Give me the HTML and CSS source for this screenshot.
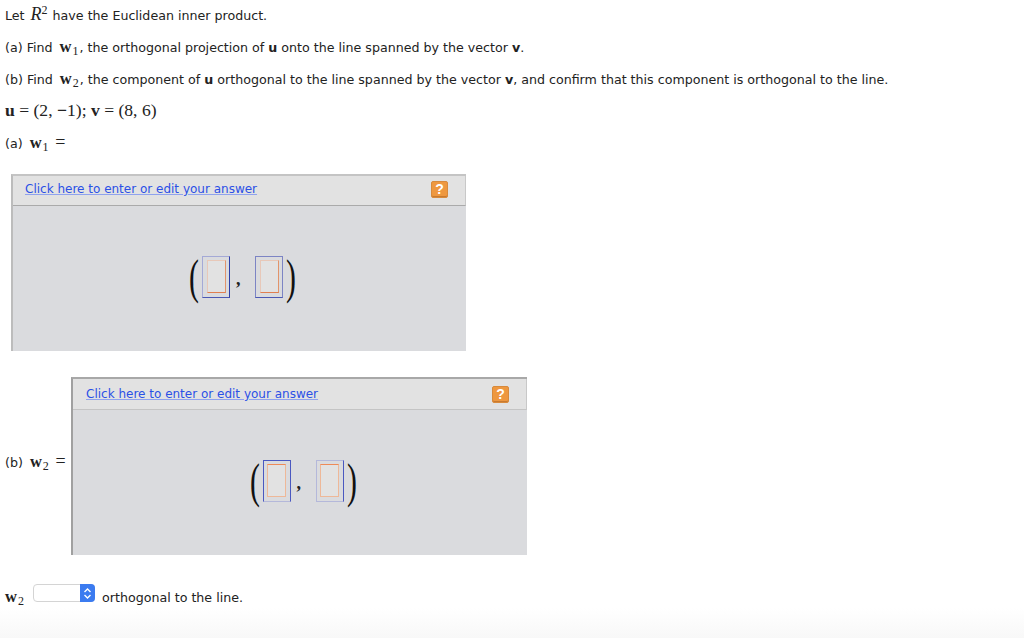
FILE: index.html
```html
<!DOCTYPE html>
<html lang="en">
<head>
    <meta charset="UTF-8">
    <title>Orthogonal projection</title>
    <link rel="stylesheet" href="styles.css">
</head>
<body>

    <p class="line">Let <span class="math"><i class="big">R</i><sup>2</sup></span> have the Euclidean inner product.</p>
    <p class="line">(a) Find <span class="math"><b class="vec">w</b><sub>1</sub></span>, the orthogonal projection of <b>u</b> onto the line spanned by the vector <b>v</b>.</p>
    <p class="line">(b) Find <span class="math"><b class="vec">w</b><sub>2</sub></span>, the component of <b>u</b> orthogonal to the line spanned by the vector <b>v</b>, and confirm that this component is orthogonal to the line.</p>
    <p class="line"><span class="math large"><b>u</b> = (2, <b>&minus;</b>1); <b>v</b> = (8, 6)</span></p>
    <p class="line">(a) <span class="math"><b class="vec">w</b><sub>1</sub> <span class="equals">=</span></span></p>

    <!-- answer a -->
    <div class="panel panel-a">
        <div class="panel-head">
            <a class="edit-link" href="#">Click here to enter or edit your answer</a>
            <span class="help">?</span>
        </div>
        <div class="panel-body">
            <span class="paren">(</span>
            <span class="box dark-right"><span class="cell warm-bottom"></span></span>
            <span class="comma">,</span>
            <span class="box dark-bottom"><span class="cell warm-bottom"></span></span>
            <span class="paren">)</span>
        </div>
    </div>

    <!-- answer b -->
    <div class="answer-row">
        <span class="answer-label">(b) <span class="math"><b class="vec">w</b><sub>2</sub> <span class="equals">=</span></span></span>
        <div class="panel panel-b">
            <div class="panel-head">
                <a class="edit-link" href="#">Click here to enter or edit your answer</a>
                <span class="help">?</span>
            </div>
            <div class="panel-body">
                <span class="paren">(</span>
                <span class="box dark-top"><span class="cell warm-top"></span></span>
                <span class="comma">,</span>
                <span class="box dark-right-only"><span class="cell warm-top"></span></span>
                <span class="paren">)</span>
            </div>
        </div>
    </div>

    <div class="last-row">
        <span class="math w2"><b>w</b><sub>2</sub></span>
        <span class="select">
            <span class="select-arrows">
                <svg width="9" height="13" viewBox="0 0 9 13" fill="none" stroke="#fff" stroke-width="1.4">
                    <path d="M1.5 5 L4.5 2 L7.5 5"/>
                    <path d="M1.5 8 L4.5 11 L7.5 8"/>
                </svg>
            </span>
        </span>
        <span>orthogonal to the line.</span>
    </div>

</body>
</html>
```

FILE: styles.css
```css
* {
    margin: 0;
    padding: 0;
    box-sizing: border-box;
}

body {
    min-height: 638px;
    font-family: "DejaVu Sans", Verdana, sans-serif;
    font-size: 12.65px;
    color: #222;
    background: linear-gradient(#fff 608px, #f8f8f8 638px);
}

.line {
    height: 32px;
    line-height: 31px;
    padding-left: 5px;
    white-space: nowrap;
}

/* formulas */
.math {
    font-family: "Liberation Serif", "Times New Roman", serif;
    font-size: 15px;
    line-height: 1;
}

.math.large {
    font-size: 17.6px;
}

.math .big {
    margin-left: 2px;
    font-size: 18px;
    line-height: 1;
}

.math .vec,
.w2 b {
    font-size: 16.5px;
    line-height: 1;
}

.math .vec {
    margin-left: 3px;
}

.math sup,
.math sub {
    font-size: 12px;
    line-height: 0;
}

.math sub {
    margin: 0 1px 0 1px;
    vertical-align: -3px;
}

.math sup {
    margin-right: 1px;
    vertical-align: 6px;
}

.equals {
    margin-left: 2px;
    font-size: 18px;
    line-height: 1;
}

/* answer panels */
.panel {
    display: flex;
    flex-direction: column;
    background: #dadbde;
    border-top: 2px solid #c4c4c4;
    border-left: 2px solid #bcbcbc;
}

.panel-a {
    width: 455px;
    height: 177px;
    margin: 14px 0 0 11px;
}

.panel-b {
    width: 456px;
    height: 178px;
    border-top-color: #a8a8a8;
    border-left-color: #a0a0a0;
}

.panel-head {
    height: 31px;
    flex: none;
    display: flex;
    align-items: center;
    justify-content: space-between;
    padding: 0 17px 0 13px;
    background: #e2e2e2;
    border-right: 1px solid #c8c8c8;
    border-bottom: 1px solid #aaa;
}

.panel-a .panel-head {
    height: 30px;
    padding-left: 12px;
    padding-bottom: 3px;
}

.panel-b .panel-head {
    border-bottom-color: #c4c4c4;
}

.edit-link {
    font-size: 12px;
    color: #2b50e6;
    text-decoration-color: #8fa2ee;
}

.help {
    width: 17px;
    height: 17px;
    display: flex;
    align-items: center;
    justify-content: center;
    font-family: "Liberation Sans", Arial, sans-serif;
    font-size: 14px;
    font-weight: bold;
    color: #fff;
    background: #ee9840;
    border: 1px solid #d88a3c;
    border-radius: 2px;
    box-shadow: inset 0 -1px 0 #c87a30;
}

.panel-body {
    flex: 1;
    display: flex;
    align-items: center;
    justify-content: center;
    padding: 0 0 4px 6px;
}

.paren {
    width: 8px;
    height: 44px;
    display: flex;
    align-items: center;
    justify-content: center;
    font-family: "Liberation Serif", "Times New Roman", serif;
    font-size: 48px;
    color: #111;
    transform: scaleX(0.62);
}

.box {
    width: 28px;
    height: 42px;
    display: flex;
    align-items: center;
    justify-content: center;
    margin: 0 4px;
    border: 1px solid #a4a9d6;
}

.dark-right {
    border-right-color: #2f3fa8;
    border-bottom-color: #4a58b4;
}

.dark-bottom {
    border-color: #7c84c4;
    border-bottom-color: #4a58b4;
}

.dark-top {
    border-color: #b4b8da;
    border-top-color: #4a58c0;
    border-left-color: #4a58c0;
    border-right-color: #4a58c0;
}

.dark-right-only {
    border-color: #b4b8da;
    border-right-color: #4a58c0;
}

.cell {
    width: 19px;
    height: 33px;
    background: #e2e2e2;
    border: 1px solid #e8c8b8;
}

.warm-bottom {
    border-right-color: #e2946a;
    border-bottom-color: #e07f50;
}

.warm-top {
    border-color: #eeb898;
    border-top-color: #ee8a58;
}

.comma {
    width: 17px;
    padding: 6px 0 0 2px;
    font-family: "Liberation Serif", "Times New Roman", serif;
    font-size: 18px;
    font-weight: bold;
}

/* (b) row */
.answer-row {
    display: flex;
    align-items: center;
    margin-top: 26px;
    padding-left: 5px;
}

.answer-label {
    width: 66px;
    flex: none;
    padding-bottom: 10px;
    white-space: nowrap;
}

.last-row {
    display: flex;
    align-items: center;
    height: 26px;
    margin-top: 29px;
    padding-left: 5px;
}

.w2 {
    width: 28px;
}

.select {
    width: 62px;
    height: 18px;
    display: flex;
    justify-content: flex-end;
    margin: -8px 7px 0 0;
    background: #fff;
    border: 1px solid #d4d4d4;
    border-radius: 4px;
}

.select-arrows {
    width: 15px;
    margin: -1px -1px -1px 0;
    display: flex;
    align-items: center;
    justify-content: center;
    background: #3b7bf0;
    border-radius: 0 4px 4px 0;
}
```
